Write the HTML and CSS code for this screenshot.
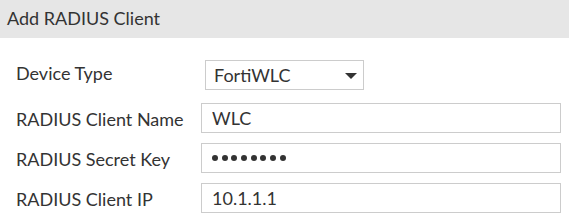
FILE: index.html
```
<!DOCTYPE html>
<html lang="en">
<head>
    <meta charset="UTF-8">
    <title>Add RADIUS Client</title>
    <link rel="stylesheet" href="styles.css">
</head>
<body>
    <div class="dialog-header">Add RADIUS Client</div>
    <form class="client-form">
        <div class="form-row row-select">
            <label>Device Type</label>
            <div class="select-box">
                <span>FortiWLC</span>
                <span class="caret"></span>
            </div>
        </div>
        <div class="form-row">
            <label>RADIUS Client Name</label>
            <input type="text" class="text-field" value="WLC">
        </div>
        <div class="form-row">
            <label>RADIUS Secret Key</label>
            <div class="text-field secret">
                <span class="dot"></span><span class="dot"></span><span class="dot"></span><span class="dot"></span>
                <span class="dot"></span><span class="dot"></span><span class="dot"></span><span class="dot"></span>
            </div>
        </div>
        <div class="form-row">
            <label>RADIUS Client IP</label>
            <input type="text" class="text-field" value="10.1.1.1">
        </div>
    </form>
</body>
</html>
```

FILE: styles.css
```
body, html {
    margin: 0;
    background: #ffffff;
    font-family: Lato, "Open Sans", sans-serif;
    color: #333333;
}
.dialog-header {
    height: 38px;
    line-height: 37px;
    padding-left: 7px;
    background-color: #e6e6e6;
    font-size: 18px;
    color: #333333;
}
.client-form {
    padding: 22px 8px 0 16px;
}
.form-row {
    display: grid;
    grid-template-columns: 185px 360px;
    align-items: center;
    height: 30px;
    margin-bottom: 10px;
}
.form-row.row-select {
    margin-bottom: 13px;
}
.form-row label {
    font-size: 18px;
    margin-top: 2px;
}
.row-select label {
    margin-top: -4px;
}
.select-box {
    display: flex;
    align-items: center;
    justify-content: space-between;
    box-sizing: border-box;
    width: 159px;
    height: 30px;
    margin-left: 4px;
    padding: 0 6px 0 8px;
    border: 1px solid #cccccc;
    font-size: 18px;
}
.caret {
    width: 0;
    height: 0;
    margin-top: 2px;
    border-left: 6px solid transparent;
    border-right: 6px solid transparent;
    border-top: 6px solid #333333;
}
.text-field {
    box-sizing: border-box;
    width: 360px;
    height: 30px;
    margin: 0;
    padding: 0 10px;
    border: 1px solid #cccccc;
    border-radius: 0;
    font-family: Lato, "Open Sans", sans-serif;
    font-size: 18px;
    color: #333333;
    outline: none;
}
.secret {
    display: flex;
    align-items: center;
    gap: 3.7px;
}
.dot {
    width: 6px;
    height: 6px;
    border-radius: 50%;
    background: #333333;
}
```
